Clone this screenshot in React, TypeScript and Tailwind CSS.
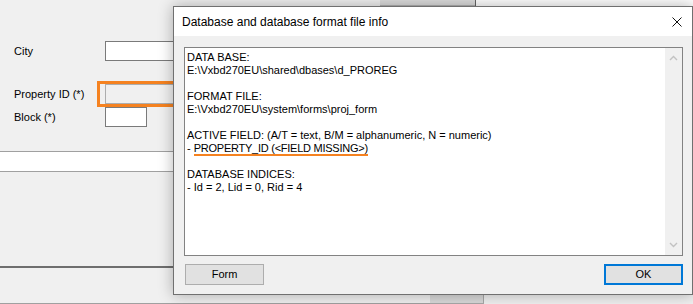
import React from 'react';

const lines: (string | null)[] = [
  'DATA BASE:',
  'E:\\Vxbd270EU\\shared\\dbases\\d_PROREG',
  null,
  'FORMAT FILE:',
  'E:\\Vxbd270EU\\system\\forms\\proj_form',
  null,
  'ACTIVE FIELD: (A/T = text, B/M = alphanumeric, N = numeric)',
  'MISSING',
  null,
  'DATABASE INDICES:',
  '- Id = 2, Lid = 0, Rid = 4',
];

function Chevron({ down }: { down?: boolean }) {
  return (
    <svg width="9" height="6" viewBox="0 0 9 6" className={down ? 'rotate-180' : ''}>
      <path d="M1 5 L4.5 1.5 L8 5" fill="none" stroke="#c2c2c2" strokeWidth="1.4" />
    </svg>
  );
}

export default function App() {
  return (
    <div
      className="relative w-[693px] h-[304px] overflow-hidden bg-[#f0f0f0] text-[11px] text-black"
      style={{ fontFamily: '"Liberation Sans", Arial, sans-serif' }}
    >
      {/* Form behind the dialog */}
      <div className="flex h-[6px]">
        <div className="w-[380px]" />
        <div className="w-[95px] bg-[#dcdcdc] border-b border-[#b4b4b4]" />
        <div className="w-[1px] bg-[#646464]" />
        <div className="flex-1 bg-white" />
      </div>

      <div className="mt-[35px] flex h-[20px] items-center">
        <span className="w-[105px] pl-[14px]">City</span>
        <div className="h-[20px] w-[120px] bg-white border border-[#7a7a7a]" />
      </div>

      <div className="mt-[20px] flex h-[26px] items-center">
        <span className="w-[97px] pl-[14px]">Property ID (*)</span>
        <div className="h-[26px] w-[120px] border-[3px] border-[#f58220] pl-[5px]">
          <div className="h-[20px] bg-[#f0f0f0] border border-[#adadad]" />
        </div>
      </div>

      <div className="flex h-[20px] items-center">
        <span className="w-[105px] pl-[14px]">Block (*)</span>
        <div className="h-[20px] w-[42px] bg-white border border-[#7a7a7a]" />
      </div>

      <div className="mt-[24px] h-[21px] bg-white border-y border-[#a0a0a0]" />

      <div className="mt-[94px] h-[2px] bg-[#6e6e6e]" />

      <div className="mt-[27px] flex h-[9px]">
        <div className="w-[430px] border-b border-[#a0a0a0]" />
        <div className="w-[54px] bg-[#d9d9d9] border-r border-b border-[#a8a8a8]" />
        <div className="flex-1" />
      </div>

      {/* Dialog window */}
      <div className="absolute left-[173px] top-[6px] flex h-[289px] w-[520px] flex-col border border-[#707070] shadow-[0_0_14px_rgba(0,0,0,0.3)]">
        <div className="flex h-[29px] items-center justify-between bg-white pl-[8px] pr-[10px] text-[12px]">
          <span>Database and database format file info</span>
          <svg width="10" height="10" viewBox="0 0 10 10">
            <path d="M0.5 0.5 L9.5 9.5 M9.5 0.5 L0.5 9.5" stroke="#111" strokeWidth="1" />
          </svg>
        </div>

        <div className="flex flex-1 flex-col bg-[#f0f0f0] pl-[10px] pr-[9px] pt-[11px] pb-[9px]">
          <div className="flex h-[209px] bg-white border border-[#828282]">
            <div className="flex-1 pl-[2px] pt-[3px] leading-[13px]">
              {lines.map((l, i) =>
                l === null ? (
                  <div key={i} className="h-[13px]" />
                ) : l === 'MISSING' ? (
                  <div key={i}>
                    -{' '}
                    <span className="relative tracking-[-0.25px]">
                      PROPERTY_ID (&lt;FIELD MISSING&gt;)
                      <span className="absolute left-0 right-0 top-[12px] h-[2px] bg-[#f58220]" />
                    </span>
                  </div>
                ) : (
                  <div key={i}>{l}</div>
                )
              )}
            </div>
            <div className="flex w-[17px] flex-col items-center justify-between bg-[#f0f0f0] py-[7px]">
              <Chevron />
              <Chevron down />
            </div>
          </div>

          <div className="mt-[8px] flex h-[21px] justify-between">
            <button className="ml-[1px] w-[79px] bg-[#e1e1e1] border border-[#adadad]">Form</button>
            <button className="w-[79px] bg-[#e1e1e1] border-2 border-[#0078d7]">OK</button>
          </div>
        </div>
      </div>
    </div>
  );
}
